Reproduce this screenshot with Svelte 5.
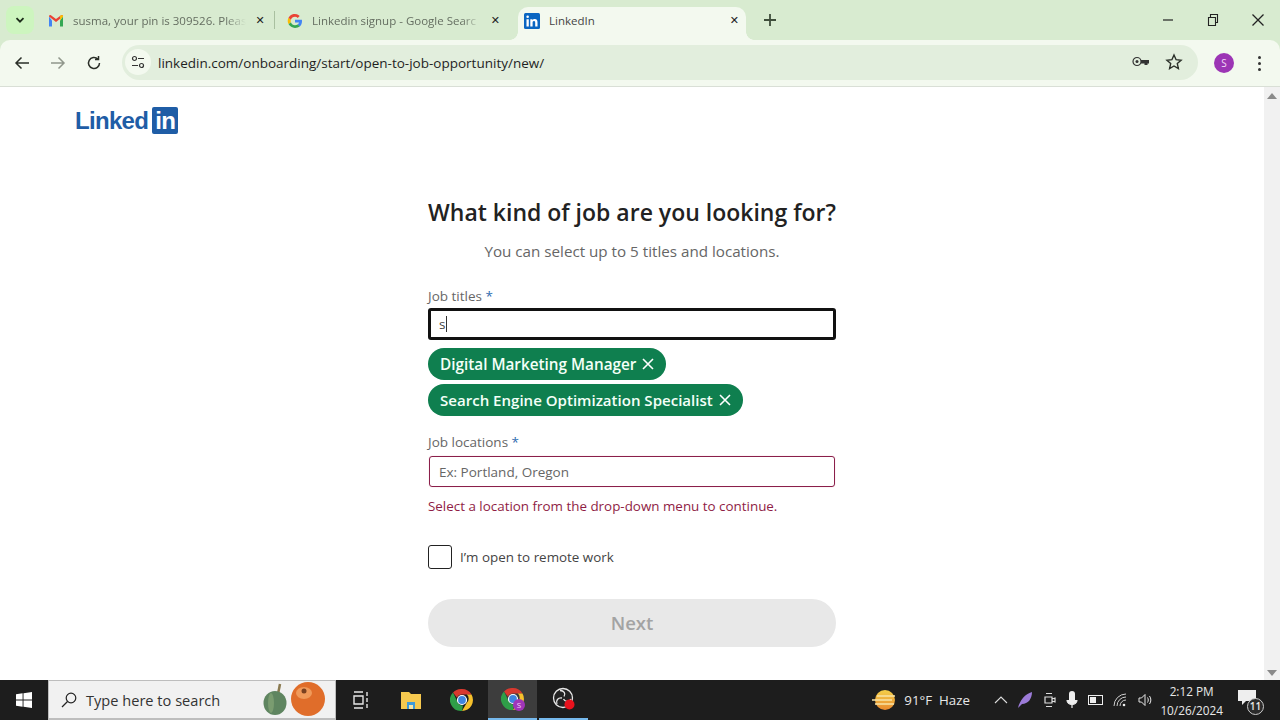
<script lang="ts">
	const taskIcons = ['files', 'chrome', 'profile', 'obs'];
</script>

<div class="screen">
	<header class="tabstrip">
		<button class="tab-search" aria-label="Search tabs">
			<svg width="12" height="12" viewBox="0 0 12 12"><path d="M2.5 4.2 6 7.7l3.5-3.5" fill="none" stroke="#1c2b1a" stroke-width="1.8" /></svg>
		</button>
		<div class="tab">
			<svg class="favicon" viewBox="0 0 16 16">
				<path d="M1 3.5v10h3V7.5z" fill="#4285f4" />
				<path d="M15 3.5v10h-3V7.5z" fill="#34a853" />
				<path d="M1 3.5 8 9l7-5.5V2.6L13.4 2 8 6 2.6 2 1 2.6z" fill="#ea4335" />
				<path d="M12 7.5 15 3.5V2.6L13.4 2 12 3z" fill="#fbbc04" />
			</svg>
			<span class="tab-title">susma, your pin is 309526. Pleas</span>
			<span class="tab-close">✕</span>
		</div>
		<i class="tab-sep"></i>
		<div class="tab second">
			<svg class="favicon" viewBox="0 0 16 16">
				<path d="M15 8.2c0-.5 0-1-.1-1.400H8v2.800h4a3.400 3.400 0 0 1-1.500 2.200l2.300 1.800C14.200 12.300 15 10.400 15 8.200z" fill="#4285f4" />
				<path d="M8 15c1.900 0 3.500-.6 4.800-1.700l-2.300-1.800c-.6.400-1.500.7-2.500.7-1.900 0-3.500-1.300-4.100-3l-2.400 1.900C2.700 13.400 5.200 15 8 15z" fill="#34a853" />
				<path d="M3.900 9.200a4.200 4.200 0 0 1 0-2.500L1.500 4.800a7 7 0 0 0 0 6.300z" fill="#fbbc04" />
				<path d="M8 3.800c1 0 2 .4 2.700 1.100l2-2A7 7 0 0 0 1.500 4.800l2.400 1.900c.6-1.700 2.200-2.900 4.100-2.900z" fill="#ea4335" />
			</svg>
			<span class="tab-title">Linkedin signup - Google Searc</span>
			<span class="tab-close">✕</span>
		</div>
		<div class="tab active">
			<svg class="favicon in" viewBox="0 0 16 16">
				<rect width="16" height="16" rx="1.500" fill="#0a66c2" />
				<path d="M2.500 6.200h2.300v7.300H2.500zM3.650 2.500a1.300 1.300 0 1 1 0 2.600 1.300 1.300 0 0 1 0-2.600zM6.300 6.200h2.200v1c.4-.7 1.200-1.200 2.300-1.200 2.200 0 2.700 1.400 2.700 3.400v4.100h-2.300V9.900c0-.9 0-1.900-1.200-1.900s-1.400.9-1.400 1.800v3.700H6.300z" fill="#fff" />
			</svg>
			<span class="tab-title">LinkedIn</span>
			<span class="tab-close">✕</span>
		</div>
		<span class="new-tab">
			<svg width="14" height="14" viewBox="0 0 14 14"><path d="M7 1v12M1 7h12" stroke="#3e4d3a" stroke-width="1.800" /></svg>
		</span>
		<div class="window-btns">
			<svg width="14" height="14" viewBox="0 0 14 14"><path d="M2 7h10" stroke="#222" stroke-width="1.200" /></svg>
			<svg width="14" height="14" viewBox="0 0 14 14"><path d="M2.500 4.500h7v8h-7zM4.500 4.500v-3h7v8h-2" fill="none" stroke="#222" stroke-width="1.100" /></svg>
			<svg width="14" height="14" viewBox="0 0 14 14"><path d="M1.500 1.500l11 11M12.500 1.500l-11 11" stroke="#222" stroke-width="1.300" /></svg>
		</div>
	</header>

	<nav class="toolbar">
		<svg class="nav-icon" viewBox="0 0 16 16"><path d="M15 8H2M7.500 2.500 2 8l5.500 5.500" fill="none" stroke="#2a2f28" stroke-width="1.500" /></svg>
		<svg class="nav-icon" viewBox="0 0 16 16"><path d="M1 8h13M8.500 2.500 14 8l-5.500 5.500" fill="none" stroke="#90978c" stroke-width="1.500" /></svg>
		<svg class="nav-icon" viewBox="0 0 16 16"><path d="M13.500 8a5.500 5.500 0 1 1-1.700-4M12.500 1v3.500H9" fill="none" stroke="#2a2f28" stroke-width="1.500" /></svg>
		<div class="omnibox">
			<span class="site-info">
				<svg width="14" height="14" viewBox="0 0 14 14">
					<circle cx="3.500" cy="3.500" r="2" fill="none" stroke="#333" stroke-width="1.200" />
					<path d="M7 3.500h6M1 10.500h6" stroke="#333" stroke-width="1.200" />
					<circle cx="10.500" cy="10.500" r="2" fill="none" stroke="#333" stroke-width="1.200" />
				</svg>
			</span>
			<span class="url">linkedin.com/onboarding/start/open-to-job-opportunity/new/</span>
			<svg class="key" width="18" height="12" viewBox="0 0 18 12">
				<circle cx="5" cy="5.500" r="4" fill="none" stroke="#333" stroke-width="1.200" />
				<circle cx="5" cy="5.500" r="1.500" fill="#333" />
				<path d="M9 4h8v3.500h-1.500V9h-3V7.500H9z" fill="#333" />
			</svg>
			<svg class="star" width="18" height="18" viewBox="0 0 18 18"><path d="m9 2 2.100 4.700 5 .5-3.800 3.400 1.100 5L9 13l-4.400 2.600 1.100-5L1.900 7.200l5-.5z" fill="none" stroke="#2a2f28" stroke-width="1.400" /></svg>
		</div>
		<span class="avatar">S</span>
		<span class="kebab"><i></i><i></i><i></i></span>
	</nav>

	<main class="page">
		<div class="content">
			<div class="logo"><span>Linked</span><b>in</b></div>
			<section class="form">
				<h1>What kind of job are you looking for?</h1>
				<p class="sub">You can select up to 5 titles and locations.</p>

				<div class="label first">Job titles <em>*</em></div>
				<div class="input focused">s<i class="caret"></i></div>
				<div class="pills">
					<span class="pill">Digital Marketing Manager <svg width="14" height="14" viewBox="0 0 14 14"><path d="M2 2l10 10M12 2 2 12" stroke="#fff" stroke-width="1.600" /></svg></span>
					<span class="pill">Search Engine Optimization Specialist <svg width="14" height="14" viewBox="0 0 14 14"><path d="M2 2l10 10M12 2 2 12" stroke="#fff" stroke-width="1.600" /></svg></span>
				</div>

				<div class="label second">Job locations <em>*</em></div>
				<div class="input error">Ex: Portland, Oregon</div>
				<p class="err">Select a location from the drop-down menu to continue.</p>

				<div class="remote"><span class="check"></span>I’m open to remote work</div>

				<button class="next">Next</button>
			</section>
		</div>
		<aside class="scrollbar">
			<svg width="10" height="6" viewBox="0 0 10 6"><path d="M5 0l5 6H0z" fill="#8a8a8a" /></svg>
			<span class="track"></span>
			<svg width="10" height="6" viewBox="0 0 10 6"><path d="M5 6 10 0H0z" fill="#8a8a8a" /></svg>
		</aside>
	</main>

	<footer class="taskbar">
		<span class="start">
			<svg width="16" height="16" viewBox="0 0 16 16"><path d="M0 2.300 6.600 1.300v6.300H0zM7.500 1.200 16 0v7.600H7.500zM0 8.500h6.600v6.300L0 13.800zM7.500 8.500H16V16l-8.500-1.200z" fill="#fff" /></svg>
		</span>
		<div class="searchbox">
			<svg width="16" height="16" viewBox="0 0 16 16"><circle cx="10" cy="6" r="4.800" fill="none" stroke="#222" stroke-width="1.200" /><path d="M6.500 9.500 1 15" stroke="#222" stroke-width="1.300" /></svg>
			<span class="search-text">Type here to search</span>
			<span class="pumpkins">
				<svg width="64" height="36" viewBox="0 0 64 36">
					<path d="M15 12 17 2" stroke="#8a7a50" stroke-width="2.500" />
					<ellipse cx="12" cy="21" rx="11.500" ry="12" fill="#5f8560" />
					<ellipse cx="8" cy="21" rx="3" ry="10" fill="#7a9c70" />
					<circle cx="45" cy="17" r="17" fill="#e06d2a" />
					<ellipse cx="41" cy="11" rx="8" ry="6" fill="#f09a5a" />
					<circle cx="41" cy="9" r="2.500" fill="#7a4020" />
				</svg>
			</span>
		</div>
		<span class="task-btn">
			<svg width="16" height="18" viewBox="0 0 16 18"><path d="M1 1h9M1 17h9M1 5h9v8H1zM14 1v4M14 7v4M14 13v4" fill="none" stroke="#e6e6e6" stroke-width="1.400" /></svg>
		</span>
		{#each taskIcons as icon}
			<span class="task-btn" class:open={icon === 'profile' || icon === 'obs'} class:current={icon === 'profile'}>
				{#if icon === 'files'}
					<svg width="22" height="20" viewBox="0 0 22 20">
						<path d="M1 2h8l2 2h10v15H1z" fill="#f6c94f" />
						<path d="M7 12h8v7H7z" fill="#3f9bd8" />
						<path d="M9 15h4v4H9z" fill="#f6e6a8" />
					</svg>
				{:else if icon === 'chrome' || icon === 'profile'}
					<svg width="24" height="24" viewBox="0 0 24 24">
						<path d="M12 1a11 11 0 0 1 9.500 5.500H12A5.500 5.500 0 0 0 7 9.800L3 4.500A11 11 0 0 1 12 1z" fill="#d8392f" />
						<path d="M21.500 6.500A11 11 0 0 1 12 23l4.800-8.200a5.500 5.500 0 0 0 0-8.300z" fill="#f5c02c" />
						<path d="M12 23A11 11 0 0 1 3 4.500L7.500 14a5.500 5.500 0 0 0 5.500 3.400z" fill="#2f9e48" />
						<circle cx="12" cy="12" r="4.500" fill="#3f85e0" stroke="#fff" stroke-width="1.200" />
						{#if icon === 'profile'}
							<circle cx="18" cy="18" r="6" fill="#a035b8" />
							<text x="18" y="21" class="badge-s">S</text>
						{/if}
					</svg>
				{:else}
					<svg width="24" height="24" viewBox="0 0 24 24">
						<circle cx="11" cy="11" r="9.500" fill="#222" stroke="#e8e8e8" stroke-width="1.300" />
						<path d="M8 3.500c4 0 6 3 4 6M19 12c-2 3.500-6 3-7.500 0M5 17c-1.500-3.500 1-6.500 5-6" fill="none" stroke="#e8e8e8" stroke-width="1.300" />
						<circle cx="17.500" cy="17.500" r="5" fill="#e8121d" />
					</svg>
				{/if}
			</span>
		{/each}

		<div class="tray">
			<svg width="25" height="20" viewBox="0 0 25 20">
				<defs>
					<linearGradient id="sun" x1="0" y1="0" x2="0" y2="1">
						<stop offset="0" stop-color="#f4cf4a" />
						<stop offset="1" stop-color="#e98a2e" />
					</linearGradient>
				</defs>
				<circle cx="13" cy="10" r="10" fill="url(#sun)" />
				<path d="M5 6h18M0 10h20M3 14h19" stroke="#f7e3a6" stroke-width="1.600" />
			</svg>
			<span class="weather">91°F&nbsp; Haze</span>
			<svg class="chev" width="14" height="8" viewBox="0 0 14 8"><path d="M1 7l6-6 6 6" fill="none" stroke="#ddd" stroke-width="1.100" /></svg>
			<svg width="16" height="18" viewBox="0 0 16 18"><path d="M1 17C3 9 8 3 15 1c0 7-4 12-10 12z" fill="#9c7bd8" /></svg>
			<svg width="14" height="16" viewBox="0 0 14 16"><path d="M2 5h7v6H2zM9 7l3-1v4l-3-1M3 1.500h6M3 14.500h6" fill="none" stroke="#ddd" stroke-width="1.200" /></svg>
			<svg width="12" height="18" viewBox="0 0 12 18"><rect x="3" y="0" width="6" height="12" rx="3" fill="#eee" /><path d="M1 9c0 6 10 6 10 0M6 14v3" fill="#eee" stroke="#eee" stroke-width="1.200" /></svg>
			<svg width="16" height="10" viewBox="0 0 16 10"><rect x=".5" y=".5" width="14" height="9" fill="none" stroke="#eee" /><rect x="2" y="2" width="6" height="6" fill="#eee" /></svg>
			<svg width="15" height="14" viewBox="0 0 15 14"><path d="M1 13A12 12 0 0 1 13 1M4 13a9 9 0 0 1 9-9M7 13a6 6 0 0 1 6-6" fill="none" stroke="#cfcfcf" stroke-width="1" /><circle cx="11" cy="12" r="1.300" fill="#eee" /></svg>
			<svg width="15" height="14" viewBox="0 0 15 14"><path d="M1 5h2.500L7 1.500v11L3.500 9H1zM9.500 4.500c1 1.500 1 3.500 0 5M11.500 3c1.800 2.500 1.800 5.500 0 8" fill="none" stroke="#e6e6e6" stroke-width="1" /></svg>
			<div class="clock"><span>2:12 PM</span><span>10/26/2024</span></div>
			<span class="notify">
				<svg width="18" height="16" viewBox="0 0 18 16"><path d="M0 0h18v11H8l-4 4v-4H0z" fill="#eee" /></svg>
				<b>11</b>
			</span>
		</div>
	</footer>
</div>

<style>
	:global(body) {
		margin: 0;
		background: #fff;
	}

	.screen {
		width: 1280px;
		height: 720px;
		display: flex;
		flex-direction: column;
		overflow: hidden;
		background: #d8ebd0;
		font-family: 'Open Sans', 'Noto Sans', sans-serif;
	}

	.tabstrip {
		height: 40px;
		flex: none;
		display: flex;
		align-items: flex-end;
		padding-left: 6px;
		box-sizing: border-box;
	}

	.tab-search {
		width: 28px;
		height: 28px;
		margin: 0 0 6px 0;
		border: 0;
		padding: 0;
		border-radius: 8px;
		background: #cdf5bf;
		display: flex;
		align-items: center;
		justify-content: center;
	}

	.tab {
		width: 240px;
		height: 33px;
		display: flex;
		align-items: center;
		gap: 9px;
		padding: 0 12px 6px 14px;
		box-sizing: border-box;
		color: #656e61;
	}

	.tab.second {
		width: 243px;
		padding: 0 18px 6px 12px;
	}

	.tab.active {
		width: 228px;
		position: relative;
		background: #f3f9ef;
		border-radius: 10px 10px 0 0;
		color: #444;
		padding: 0 7px 6px 6px;
	}

	/* flared bottom corners of the open tab */
	.tab.active::before,
	.tab.active::after {
		content: '';
		position: absolute;
		bottom: 0;
		width: 8px;
		height: 8px;
	}

	.tab.active::before {
		left: -8px;
		background: radial-gradient(circle at 0 0, transparent 7.500px, #f3f9ef 8px);
	}

	.tab.active::after {
		right: -8px;
		background: radial-gradient(circle at 100% 0, transparent 7.500px, #f3f9ef 8px);
	}

	.tab-sep {
		width: 1px;
		height: 18px;
		margin-bottom: 11px;
		background: #a9c0a0;
	}

	.favicon {
		width: 16px;
		height: 16px;
		flex: none;
	}

	.tab-title {
		flex: 1;
		font-size: 11.500px;
		white-space: nowrap;
		-webkit-mask-image: linear-gradient(90deg, #000 88%, transparent);
		mask-image: linear-gradient(90deg, #000 88%, transparent);
	}

	.tab.active .tab-title {
		-webkit-mask-image: none;
		mask-image: none;
	}

	.tab-close {
		font-size: 11px;
		color: #222;
		font-family: 'DejaVu Sans', sans-serif;
	}

	.new-tab {
		margin: 0 0 13px 17px;
		display: flex;
	}

	.window-btns {
		margin: 0 15px 13px auto;
		display: flex;
		gap: 31px;
	}

	.toolbar {
		height: 47px;
		flex: none;
		background: #f3f9ef;
		border-bottom: 1px solid #d9dfd6;
		border-radius: 10px 10px 0 0;
		box-sizing: border-box;
		display: flex;
		align-items: center;
		padding: 0 19px 0 14px;
	}

	.nav-icon {
		width: 16px;
		height: 16px;
		margin-right: 20px;
		flex: none;
	}

	.omnibox {
		width: 1076px;
		height: 35px;
		border-radius: 18px;
		background: #e2eedd;
		display: flex;
		align-items: center;
		padding: 0 15px 0 3px;
		box-sizing: border-box;
		margin-top: -2px;
	}

	.site-info {
		width: 26px;
		height: 26px;
		background: #f3f9ef;
		border-radius: 50%;
		display: flex;
		align-items: center;
		justify-content: center;
		margin-right: 7px;
	}

	.url {
		flex: 1;
		padding-top: 2px;
		font-size: 13.500px;
		color: #1f1f1f;
	}

	.key {
		margin-right: 15px;
	}

	.avatar {
		width: 20px;
		height: 20px;
		border-radius: 50%;
		margin-left: 16px;
		background: #9c35b5;
		color: #f2d9f7;
		font-size: 10px;
		display: flex;
		align-items: center;
		justify-content: center;
	}

	.kebab {
		margin-left: auto;
		display: flex;
		flex-direction: column;
		gap: 3px;
	}

	.kebab i {
		width: 3px;
		height: 3px;
		border-radius: 50%;
		background: #333;
	}

	.page {
		flex: 1;
		min-height: 0;
		display: flex;
		background: #fff;
	}

	.content {
		flex: 1;
		min-width: 0;
		position: relative;
	}

	.logo {
		position: absolute;
		left: 75px;
		top: 20px;
		display: flex;
		align-items: center;
		gap: 4px;
		font-family: 'Liberation Sans', sans-serif;
		font-weight: 700;
		font-size: 24px;
		letter-spacing: -0.700px;
		color: #1f5da6;
		line-height: 27px;
	}

	.logo b {
		width: 26px;
		height: 27px;
		border-radius: 2px;
		background: #1f5da6;
		color: #fff;
		display: flex;
		align-items: flex-end;
		justify-content: center;
		line-height: 27px;
	}

	.form {
		width: 410px;
		margin-left: 428px;
		padding-top: 109px;
		color: #444;
	}

	h1 {
		margin: 0;
		font-size: 23px;
		font-weight: 600;
		line-height: 32px;
		color: #222;
		white-space: nowrap;
		width: 408px;
		text-align: center;
	}

	.sub {
		width: 408px;
		margin: 12px 0 0;
		text-align: center;
		font-size: 15.200px;
		line-height: 22px;
		color: #666;
	}

	.label {
		font-size: 13.500px;
		line-height: 18px;
		color: #666;
	}

	.label.first {
		margin-top: 25px;
	}

	.label.second {
		margin-top: 17px;
	}

	.label em {
		font-style: normal;
		color: #2f6db0;
	}

	.input {
		box-sizing: border-box;
		height: 31px;
		width: 408px;
		border-radius: 3px;
		padding: 0 9px;
		font-size: 13.500px;
		display: flex;
		align-items: center;
	}

	.input.focused {
		height: 32px;
		margin-top: 3px;
		border: 3px solid #111;
		color: #444;
		padding-left: 8px;
	}

	.caret {
		width: 1px;
		height: 16px;
		background: #333;
		margin-left: 1px;
	}

	.input.error {
		margin-top: 5px;
		width: 406px;
		margin-left: 1px;
		border: 1px solid #8a1f4a;
		box-shadow: 0 0 1px #e8a3bb;
		color: #666;
		padding-left: 9px;
	}

	.pills {
		margin-top: 8px;
		display: flex;
		flex-direction: column;
		align-items: flex-start;
		gap: 4px;
	}

	.pill {
		height: 32px;
		box-sizing: border-box;
		padding: 0 11px 0 12px;
		display: flex;
		align-items: center;
		gap: 5px;
		border-radius: 16px;
		background: #0f7f4f;
		color: #f4fff8;
		font-size: 15.050px;
		font-weight: 600;
		white-space: nowrap;
	}

	.pill:first-child {
		font-size: 15.300px;
	}

	.err {
		margin: 9px 0 0;
		font-size: 13.400px;
		line-height: 20px;
		color: #8f1d45;
	}

	.remote {
		margin-top: 29px;
		display: flex;
		align-items: center;
		gap: 8px;
		font-size: 13.400px;
		color: #444;
	}

	.check {
		width: 24px;
		height: 24px;
		box-sizing: border-box;
		border: 1px solid #222;
		border-radius: 3px;
	}

	.next {
		display: block;
		width: 408px;
		height: 48px;
		margin-top: 30px;
		border: 0;
		border-radius: 24px;
		background: #e8e8e8;
		color: #a3a3a3;
		font-family: inherit;
		font-size: 18.500px;
		font-weight: 600;
		padding: 0 0 1px;
	}

	.scrollbar {
		width: 16px;
		flex: none;
		display: flex;
		flex-direction: column;
		align-items: center;
		padding: 6px 0 4px;
		box-sizing: border-box;
		background: #f1f1f1;
	}

	.track {
		flex: 1;
	}

	.taskbar {
		height: 40px;
		flex: none;
		background: #1d1d1d;
		display: flex;
		align-items: center;
	}

	.start {
		width: 48px;
		display: flex;
		justify-content: center;
	}

	.searchbox {
		box-sizing: border-box;
		width: 288px;
		height: 40px;
		background: #f1f1f1;
		border: 1px solid #bdbdbd;
		border-bottom-width: 2px;
		display: flex;
		align-items: center;
		padding: 0 8px 0 12px;
		gap: 9px;
		color: #333;
	}

	.search-text {
		flex: 1;
		font-size: 14.600px;
	}

	.pumpkins {
		display: flex;
	}

	.task-btn {
		box-sizing: border-box;
		width: 49px;
		height: 40px;
		margin-right: 1.750px;
		display: flex;
		align-items: center;
		justify-content: center;
	}

	.task-btn.open {
		border-bottom: 2px solid #76b9ed;
	}

	.task-btn.current {
		background: #3d3d3d;
	}

	.badge-s {
		font-size: 8px;
		fill: #f4d8fa;
		text-anchor: middle;
		font-family: 'Open Sans', sans-serif;
	}

	.tray {
		margin-left: auto;
		display: flex;
		align-items: center;
		gap: 9.500px;
		padding-right: 24px;
		color: #e8e8e8;
	}

	.weather {
		font-size: 13.300px;
		margin-left: -2.500px;
		margin-right: 14.500px;
	}

	.clock {
		display: flex;
		flex-direction: column;
		align-items: center;
		font-size: 11.800px;
		line-height: 19px;
		padding-top: 2px;
		margin: 0 5.500px 0 -2px;
	}

	.notify {
		position: relative;
		display: flex;
		margin-top: -4px;
	}

	.notify b {
		position: absolute;
		right: -8px;
		bottom: -9px;
		width: 15px;
		height: 15px;
		border-radius: 50%;
		background: #2b2b2b;
		border: 1px solid #ccc;
		font-size: 10px;
		font-weight: 600;
		line-height: 15px;
		text-align: center;
	}
</style>
